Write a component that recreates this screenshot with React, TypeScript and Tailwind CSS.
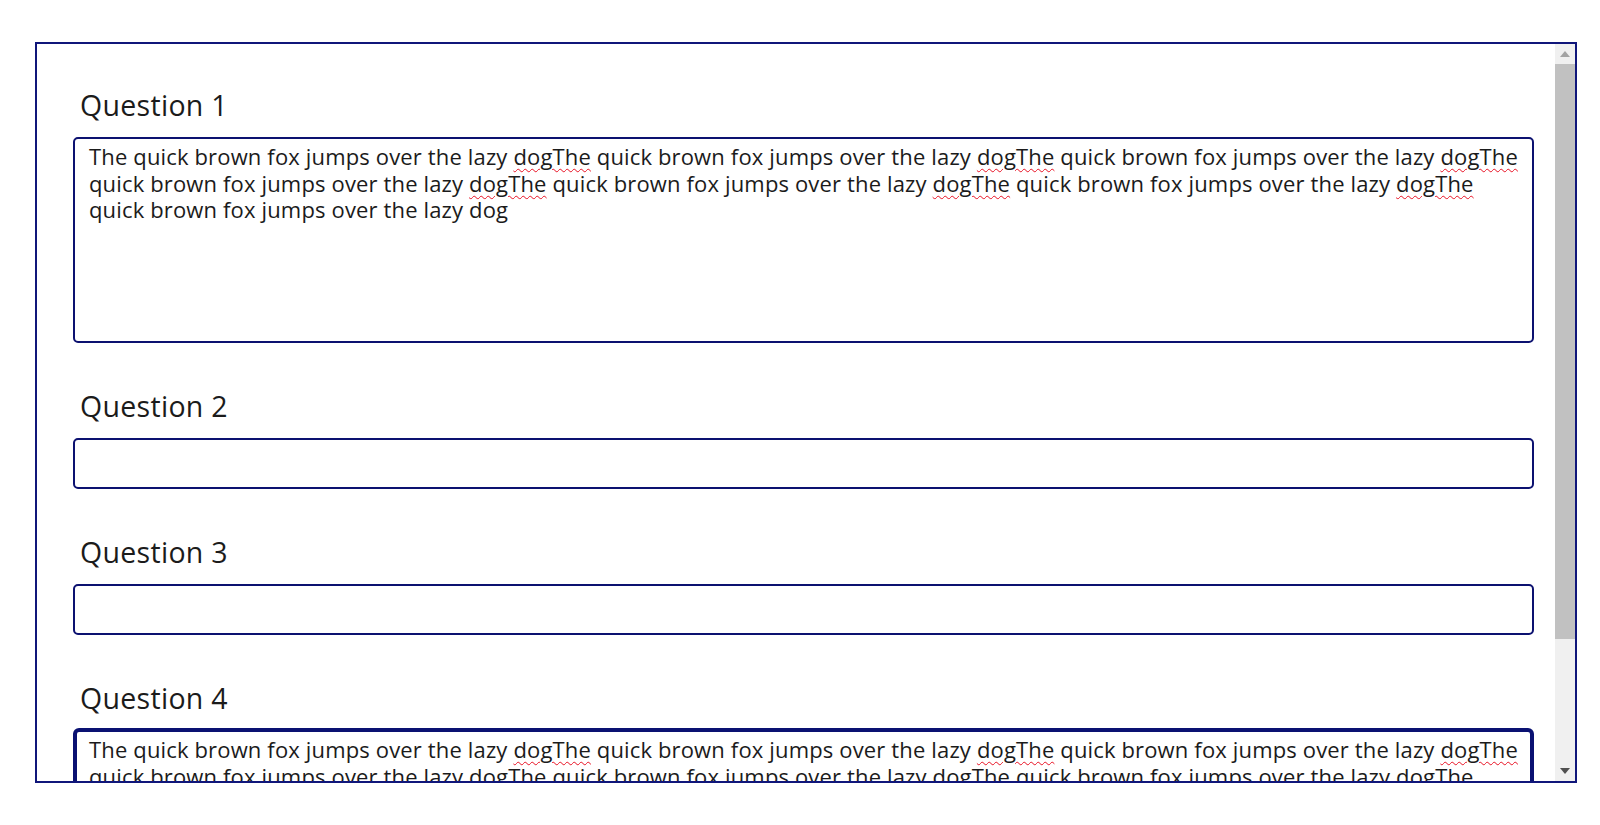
const FOX = 'The quick brown fox jumps over the lazy '

type Line = { text: string; wavy: boolean }

const longAnswer: Line[][] = [
  [
    { text: FOX, wavy: false },
    { text: 'dogThe', wavy: true },
    { text: ' quick brown fox jumps over the lazy ', wavy: false },
    { text: 'dogThe', wavy: true },
    { text: ' quick brown fox jumps over the lazy ', wavy: false },
    { text: 'dogThe', wavy: true },
  ],
  [
    { text: 'quick brown fox jumps over the lazy ', wavy: false },
    { text: 'dogThe', wavy: true },
    { text: ' quick brown fox jumps over the lazy ', wavy: false },
    { text: 'dogThe', wavy: true },
    { text: ' quick brown fox jumps over the lazy ', wavy: false },
    { text: 'dogThe', wavy: true },
  ],
  [{ text: 'quick brown fox jumps over the lazy dog', wavy: false }],
]

function AnswerText({ lines }: { lines: Line[][] }) {
  return (
    <div className="text-[22px] leading-[26.5px] tracking-[0.15px] text-[#1b1b1b]">
      {lines.map((line, i) => (
        <div key={i} className="whitespace-pre">
          {line.map((part, j) =>
            part.wavy ? (
              <span
                key={j}
                className="underline decoration-wavy decoration-[#e81123] decoration-1 underline-offset-[3px]"
              >
                {part.text}
              </span>
            ) : (
              <span key={j}>{part.text}</span>
            ),
          )}
        </div>
      ))}
    </div>
  )
}

function Label({ children, tight }: { children: string; tight?: boolean }) {
  return (
    <div
      className={`h-[36px] pl-[7px] text-[28.5px] leading-[36px] tracking-[0.3px] text-[#1b1b1b] ${
        tight ? 'mb-[12px]' : 'mb-[14px]'
      }`}
    >
      {children}
    </div>
  )
}

export default function App() {
  return (
    <div className="min-h-screen bg-white pl-[35px] pt-[42px]" style={{ fontFamily: '"Open Sans", "Noto Sans", sans-serif' }}>
      <div className="flex h-[741px] w-[1542px] border-2 border-[#10167a] bg-white">
        {/* form content */}
        <div className="flex-1 overflow-hidden pl-[36px] pr-[21px] pt-[43px]">
          <Label>Question 1</Label>
          <div className="h-[206px] rounded-[5px] border-[2.5px] border-[#0c1170] px-[14px] pt-[4px]">
            <AnswerText lines={longAnswer} />
          </div>

          <div className="mt-[45px]">
            <Label>Question 2</Label>
            <div className="h-[51px] rounded-[5px] border-[2.5px] border-[#0c1170]" />
          </div>

          <div className="mt-[45px]">
            <Label>Question 3</Label>
            <div className="h-[51px] rounded-[5px] border-[2.5px] border-[#0c1170]" />
          </div>

          <div className="mt-[45px]">
            <Label tight>Question 4</Label>
            <div className="h-[206px] rounded-[6px] border-4 border-[#0a1172] px-[12px] pt-[4px]">
              <AnswerText lines={longAnswer} />
            </div>
          </div>
        </div>

        {/* scrollbar */}
        <div className="flex w-[20px] flex-col bg-[#f0f0f0]">
          <div className="flex h-[20px] items-center justify-center">
            <svg width="10" height="6" viewBox="0 0 10 6">
              <path d="M0 6 L5 0 L10 6 Z" fill="#a3a3a3" />
            </svg>
          </div>
          <div className="h-[575px] bg-[#c1c1c1]" />
          <div className="flex-1" />
          <div className="flex h-[20px] items-center justify-center">
            <svg width="10" height="6" viewBox="0 0 10 6">
              <path d="M0 0 L10 0 L5 6 Z" fill="#505050" />
            </svg>
          </div>
        </div>
      </div>
    </div>
  )
}
